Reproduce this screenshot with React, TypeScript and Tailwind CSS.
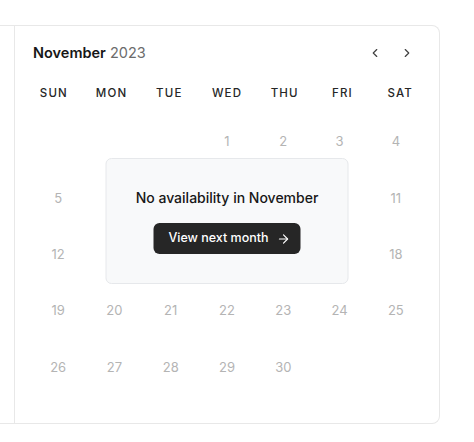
import React from 'react';
import { ArrowRight, ChevronLeft, ChevronRight } from 'lucide-react';

// November 2023 starts on a Wednesday
const WEEKDAYS = ['SUN', 'MON', 'TUE', 'WED', 'THU', 'FRI', 'SAT'];
const LEADING_BLANKS = 3;
const DAYS_IN_MONTH = 30;

function DayGrid() {
  const cells: (number | null)[] = [
    ...Array.from({ length: LEADING_BLANKS }, () => null),
    ...Array.from({ length: DAYS_IN_MONTH }, (_, i) => i + 1),
  ];

  return (
    <div className="relative mx-auto mt-[10px] w-[394px]">
      <div className="grid grid-cols-7">
        {cells.map((day, i) => (
          <div
            key={i}
            className="flex h-[56.3px] items-center justify-center text-[13px] text-[#b4b4b4]"
          >
            {day}
          </div>
        ))}
      </div>

      {/* Empty-state overlay */}
      <div className="absolute left-1/2 top-[44px] flex w-[243px] -translate-x-1/2 flex-col items-center gap-[15px] rounded-md border border-[#e6e8eb] bg-[#f8f9fa] py-[29px]">
        <p className="text-[14px] font-medium leading-5 text-[#171717]">
          No availability in November
        </p>
        <button className="flex h-[31px] items-center gap-2 rounded-md bg-[#262626] pl-[15px] pr-[10px] text-[12.5px] font-medium text-white">
          View next month
          <ArrowRight className="h-3.5 w-3.5" strokeWidth={2} />
        </button>
      </div>
    </div>
  );
}

export default function App() {
  return (
    <div
      className="h-[442px] w-[474px] bg-white pt-[25px]"
      style={{ fontFamily: 'Inter, "Noto Sans", sans-serif' }}
    >
      <div className="flex h-[399px] w-[440px] rounded-r-lg border-y border-r border-[#e8e8e8]">
        {/* Cropped side panel */}
        <div className="w-[15px] shrink-0 border-r border-[#e8e8e8]" />

        <div className="flex-1 pt-[15px]">
          {/* Header */}
          <div className="flex items-center justify-between pl-[18px] pr-[20px]">
            <h2 className="text-[14.5px] leading-5 text-[#171717]">
              <span className="font-semibold">November</span>{' '}
              <span className="text-[#6b6b6b]">2023</span>
            </h2>
            <div className="flex items-center gap-2">
              <button className="flex h-6 w-6 items-center justify-center text-[#404040]">
                <ChevronLeft className="h-3.5 w-3.5" strokeWidth={2} />
              </button>
              <button className="flex h-6 w-6 items-center justify-center text-[#404040]">
                <ChevronRight className="h-3.5 w-3.5" strokeWidth={2} />
              </button>
            </div>
          </div>

          {/* Weekday labels */}
          <div className="mx-auto mt-[19px] grid w-[404px] grid-cols-7">
            {WEEKDAYS.map((d) => (
              <div
                key={d}
                className="flex h-5 items-center justify-center text-[11.5px] font-medium tracking-[0.1em] text-[#262626]"
              >
                {d}
              </div>
            ))}
          </div>

          <DayGrid />
        </div>
      </div>
    </div>
  );
}
